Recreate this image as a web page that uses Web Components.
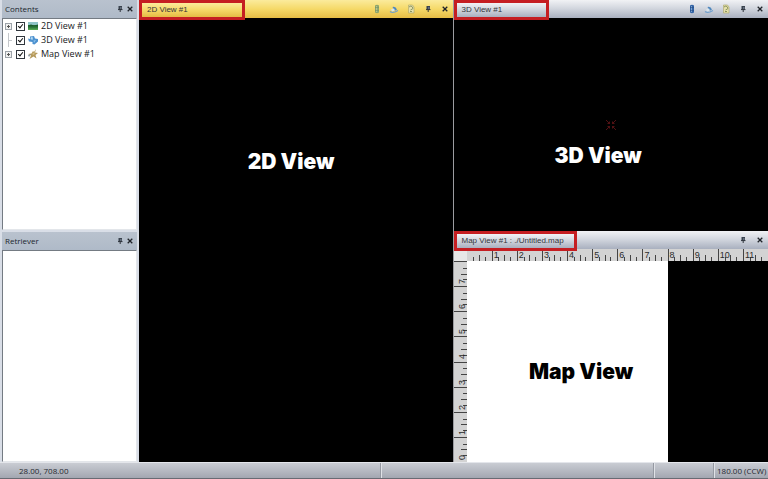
<!DOCTYPE html>
<html lang="en">
<head>
<meta charset="utf-8">
<meta name="viewport" content="width=device-width, initial-scale=1">
<title>Workspace</title>
<style>
html, body { height: 100%; margin: 0; }
body { overflow: hidden; font-family: "Open Sans", "Noto Sans", sans-serif; font-size: 9px; color: #1d2025; background: #d9dee7; }
</style>
</head>
<body>
<work-space></work-space>
<script>
function define(name, html, setup) {
  const template = document.createElement('template');
  template.innerHTML = html;
  customElements.define(name, class extends HTMLElement {
    constructor() {
      super();
      this.attachShadow({ mode: 'open' }).append(template.content.cloneNode(true));
    }
    connectedCallback() {
      if (setup && !this.ready) { this.ready = true; setup(this, this.shadowRoot); }
    }
  });
}

const glyphs = {
  pin: '<path d="M3.500 2h3.500v3.500H3.500z" fill="#39424e"/><path d="M5.500 3h.8v2h-.8z" fill="#8c98a8"/><path d="M3 5.600h4.500M5.200 6v2" stroke="#20262e" stroke-width=".9" fill="none"/>',
  close: '<path d="M2.700 2.800l4.600 4.400M7.300 2.800L2.700 7.200" stroke="#20242a" stroke-width="1.300" fill="none"/>',
  bar: '<path d="M3 1.500q2-1.500 4 0v7q-2 1.500-4 0z" fill="#3263a5"/><path d="M4 2h1v6H4z" fill="#7ca2ce"/><path d="M3 3.500h4M3 6.500h4" stroke="#234a83" stroke-width=".6"/>',
  barSoft: '<path d="M3 1.500q2-1.500 4 0v7q-2 1.500-4 0z" fill="#8da56c"/><path d="M4 2h1.200v6H4z" fill="#b9c48b"/><path d="M3 3.500h4M3 6.500h4" stroke="#718e67" stroke-width=".6"/>',
  sweep: '<path d="M1 7.500q2 1.500 5 .5l3-1.500" stroke="#6f9fcd" stroke-width="1.300" fill="none"/><path d="M3.500 3q3-1 4.500 2.500l-2.500 1.500z" fill="#4f87bd"/><path d="M2 5.500l3-1 1 2-3 1z" fill="#d9e6ee"/>',
  page: '<path d="M2.500 1h4l1.500 2v6H2.500z" fill="#e6e0ac" stroke="#a9a567" stroke-width=".6"/><path d="M3 3q2-2 3.500 0T4.500 6M6 7.500H4" stroke="#8c9760" fill="none"/>',
  image: '<path d="M0 1h10v8H0z" fill="#2f7b3c"/><path d="M0 1h10v3H0z" fill="#8fc3c7"/><path d="M0 4.500l3-1 3 1 4-1v2H0z" fill="#1b5a2b"/><path d="M0 7.500h10V9H0z" fill="#55a450"/>',
  globe: '<path d="M2 1.500l4-.5 1 2.500 3 .5v2.500L6.500 9.500l-2-.5V7L1 6.500 0 3.500l2 .5z" fill="#4c91cf"/><path d="M3 2l2 .5-.5 2.500-2-1z" fill="#b5daf3"/><path d="M5.500 5.500l2.500-.5-2 3z" fill="#8bc0e9"/>',
  star: '<path d="M8 0L7 3.500 10 4 7.500 6l1 3.500L5.500 7.500 1.500 10 3 6.500 0 5l3.500-.5L5 2l1 1z" fill="#b59a5c"/><path d="M4 5l3-2-1 3z" fill="#d8c18b"/><path d="M0 6l3-1-2 3z" fill="#8696a3"/>'
};

define('glyph-icon', `
<style>:host{display:block;width:10px;height:10px}svg{display:block;width:100%;height:100%}</style>
<svg viewBox="0 0 10 10" aria-hidden="true"></svg>`,
(el, root) => { if (el.hasAttribute('name')) root.querySelector('svg').innerHTML = glyphs[el.getAttribute('name')]; });

define('tool-button', `
<style>
:host{display:block}
button{display:block;margin:0;padding:0;border:0;background:none}
</style>
<button type="button"><glyph-icon></glyph-icon></button>`,
(el, root) => {
  root.querySelector('button').setAttribute('aria-label', el.getAttribute('label'));
  root.querySelector('glyph-icon').shadowRoot.querySelector('svg').innerHTML = glyphs[el.getAttribute('icon')];
});

define('dock-panel', `
<style>
:host{display:flex;flex-direction:column;min-height:0}
header{display:flex;align-items:center;height:18px;flex:none;box-sizing:border-box;padding:0 2px 0 3px;background:linear-gradient(#b9c2ce,#afbac8)}
h2{flex:1;margin:0;font-size:8px;line-height:12px;font-weight:400;color:#20262e}
.content{flex:1;min-height:0;box-sizing:border-box;background:#fff;border:1px solid #747b83;border-right-color:#e3e6ea;border-bottom-color:#e3e6ea;padding:0 2px}
</style>
<header><h2><slot name="title"></slot></h2>
<tool-button icon="pin" label="Auto hide"></tool-button><tool-button icon="close" label="Close"></tool-button></header>
<div class="content"><slot></slot></div>`);

define('tree-item', `
<style>
:host{display:flex;align-items:center;height:14px}
.toggle,.leaf{box-sizing:border-box;width:7px;flex:none;margin:0 4px 0 0;padding:0}
.toggle{height:7px;border:1px solid #9da3aa;background:linear-gradient(#555,#555) 1px 2px/3px 1px no-repeat,linear-gradient(#555,#555) 2px 1px/1px 3px no-repeat,#f0f0f0}
.leaf{height:14px;background:linear-gradient(#c4c7cb,#c4c7cb) 3px 7px/4px 1px no-repeat,linear-gradient(#c4c7cb,#c4c7cb) 3px 0/1px 14px no-repeat}
label{display:flex;align-items:center}
input{appearance:none;position:relative;box-sizing:border-box;width:9px;height:9px;margin:0 3px 0 0;border:1px solid #30363d;background:#fff}
input:checked::before{content:"";position:absolute;left:2px;top:0;width:2px;height:4px;border:solid #111;border-width:0 1px 1px 0;transform:rotate(40deg)}
.text{margin-left:3px;line-height:14px;color:#17191c}
</style>
<button class="toggle" type="button" aria-label="Expand"></button><span class="leaf"></span>
<label><input type="checkbox" checked><glyph-icon></glyph-icon><span class="text"><slot></slot></span></label>`,
(el, root) => {
  root.querySelector('glyph-icon').shadowRoot.querySelector('svg').innerHTML = glyphs[el.getAttribute('icon')];
  root.querySelector(el.hasAttribute('leaf') ? '.toggle' : '.leaf').remove();
});

define('view-pane', `
<style>
:host{display:flex;flex-direction:column;min-width:0;min-height:0;--bar:linear-gradient(#f1f2f5,#d3d7df 45%,#a9b0bf)}
:host([active]){--bar:linear-gradient(#fbeb9c,#f5d968 50%,#e5bc45)}
header{display:flex;justify-content:space-between;height:18px;flex:none;padding-right:3px;background:var(--bar)}
h2{position:relative;z-index:1;box-sizing:border-box;height:20px;margin:0;padding:0 10px 0 5px;border:3px solid #c51e22;font:400 8px/14px "Liberation Sans",Arial,sans-serif;color:#34353a;background:var(--bar);min-width:var(--tab,95px)}
nav{display:flex;align-items:center;gap:7px}
.canvas{position:relative;flex:1;min-height:0;background:#000}
</style>
<header><h2><slot name="title"></slot></h2><nav><slot name="tools"></slot></nav></header>
<div class="canvas"><slot></slot></div>`);

define('pane-caption', `
<style>
:host{position:absolute;left:var(--x,50%);top:var(--y,50%);transform:translate(-50%,-50%);white-space:nowrap;font:900 21px/24px Inter,"DejaVu Sans",sans-serif;color:var(--ink,#fff)}
</style><slot></slot>`);

define('centre-mark', `
<style>:host{display:grid;place-items:center;height:100%}svg{width:12px;height:12px}</style>
<svg viewBox="0 0 12 12" aria-hidden="true"><path d="M1 1l3.500 3.500M11 1L7.500 4.500M1 11l3.500-3.500M11 11L7.500 7.500M4.500 2.500v2h-2M7.500 2.500v2h2M4.500 9.500v-2h-2M7.500 9.500v-2h2" fill="none" stroke="#74191b" stroke-width=".7"/></svg>`);

define('ruler-bar', `
<style>
:host{display:grid;grid-auto-flow:column;grid-auto-columns:1fr;overflow:hidden;background:#d3d3d3;font:9px/13px "Liberation Sans",Arial,sans-serif;color:#2b2b2b}
:host([vertical]){grid-auto-flow:row;grid-auto-columns:auto;grid-auto-rows:1fr}
.cell{display:flex;min-width:0;min-height:0;box-sizing:border-box;border-left:1px solid #444;padding-left:1px;
background:linear-gradient(#444,#444) 25% 100%/1px 4px no-repeat,linear-gradient(#444,#444) 50% 100%/1px 6px no-repeat,linear-gradient(#444,#444) 75% 100%/1px 4px no-repeat}
.cell.origin{border-color:transparent}
:host([vertical]) .cell{border:0;border-top:1px solid #444;padding:0 0 2px;align-items:flex-end;justify-content:flex-end;
background:linear-gradient(#444,#444) 100% 25%/4px 1px no-repeat,linear-gradient(#444,#444) 100% 50%/6px 1px no-repeat,linear-gradient(#444,#444) 100% 75%/4px 1px no-repeat}
:host([vertical]) span{writing-mode:sideways-lr;line-height:9px}
</style>`,
(el, root) => {
  for (const text of el.getAttribute('marks').split(',')) {
    const cell = document.createElement('div');
    cell.className = text ? 'cell' : 'cell origin';
    const span = document.createElement('span');
    span.textContent = text;
    cell.append(span);
    root.append(cell);
  }
});

define('map-sheet', `
<style>
:host{display:grid;grid-template:12px 1fr/13px 1fr;height:100%}
.corner{background:#e7e7e7}
.area{display:grid;grid-template-columns:2fr 1fr;background:#000}
.paper{position:relative;background:#fff}
</style>
<div class="corner"></div>
<ruler-bar marks=",1,2,3,4,5,6,7,8,9,10,11"></ruler-bar>
<ruler-bar vertical marks="7,6,5,4,3,2,1,0"></ruler-bar>
<div class="area"><div class="paper"><slot></slot></div></div>`);

define('status-bar', `
<style>
:host{display:grid;grid-template-columns:381fr 273fr 60fr 54px;height:17px;box-sizing:border-box;border-top:1px solid #e4e6eb;border-bottom:1px solid #686b73;background:linear-gradient(#c9ccd3,#a3a7b1);font-size:8px;line-height:15px;color:#25282e;white-space:nowrap;overflow:hidden}
div{min-width:0;overflow:hidden;padding-left:2px;border-left:1px solid #e0e2e7;box-shadow:-1px 0 #9599a2}
.position{padding-left:18px;border-left-color:transparent}
</style>
<div class="position"><slot name="position"></slot></div><div></div><div></div><div><slot name="angle"></slot></div>`);

define('work-space', `
<style>
:host{display:grid;grid-template-rows:minmax(0,1fr) auto;height:100vh}
main{display:grid;grid-template-columns:135px minmax(0,1fr) minmax(0,1fr);min-height:0;padding-left:2px}
.docks{display:grid;grid-template-rows:minmax(0,1fr) minmax(0,1fr);gap:2px}
.two{margin-left:2px}
.views{display:grid;grid-template-rows:minmax(0,1fr) minmax(0,1fr);border-left:1px solid #9b9ca0}
.two{--tab:106px}.map{--tab:123px}
</style>
<main>
<div class="docks">
<dock-panel><span slot="title">Contents</span>
<tree-item icon="image">2D View #1</tree-item>
<tree-item icon="globe" leaf>3D View #1</tree-item>
<tree-item icon="star">Map View #1</tree-item>
</dock-panel>
<dock-panel><span slot="title">Retriever</span></dock-panel>
</div>
<view-pane class="two" active><span slot="title">2D View #1</span>
<tool-button slot="tools" icon="barSoft" label="Link view"></tool-button>
<tool-button slot="tools" icon="sweep" label="Rotate"></tool-button>
<tool-button slot="tools" icon="page" label="Properties"></tool-button>
<tool-button slot="tools" icon="pin" label="Pin"></tool-button>
<tool-button slot="tools" icon="close" label="Close"></tool-button>
<pane-caption style="--x:48.5%;--y:32.5%">2D View</pane-caption>
</view-pane>
<div class="views">
<view-pane><span slot="title">3D View #1</span>
<tool-button slot="tools" icon="bar" label="Link view"></tool-button>
<tool-button slot="tools" icon="sweep" label="Rotate"></tool-button>
<tool-button slot="tools" icon="page" label="Properties"></tool-button>
<tool-button slot="tools" icon="pin" label="Pin"></tool-button>
<tool-button slot="tools" icon="close" label="Close"></tool-button>
<centre-mark></centre-mark>
<pane-caption style="--x:46%;--y:65%">3D View</pane-caption>
</view-pane>
<view-pane class="map"><span slot="title">Map View #1 : ./Untitled.map</span>
<tool-button slot="tools" icon="pin" label="Pin"></tool-button>
<tool-button slot="tools" icon="close" label="Close"></tool-button>
<map-sheet><pane-caption style="--x:57%;--y:55%;--ink:#000">Map View</pane-caption></map-sheet>
</view-pane>
</div>
</main>
<status-bar><span slot="position">28.00, 708.00</span><span slot="angle">180.00 (CCW)</span></status-bar>`);
</script>
</body>
</html>
